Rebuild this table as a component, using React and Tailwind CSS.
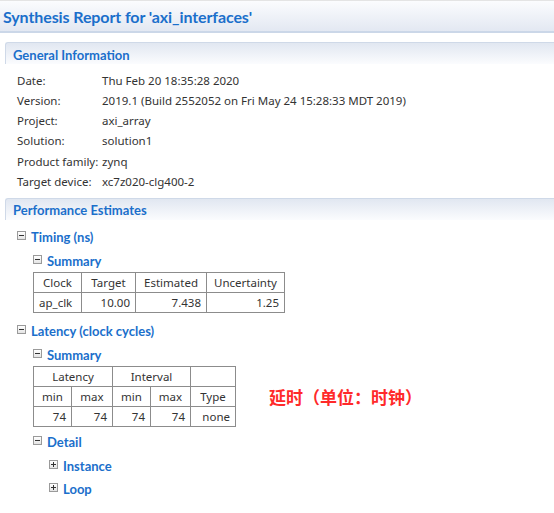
import React from "react";

const BLUE = "text-[#1b6fcb]";
const HFONT = { fontFamily: 'Lato, "Noto Sans", sans-serif' };

function Box({ plus }) {
  return (
    <span className="relative inline-block w-[9px] h-[9px] border border-[#9a9a9a] bg-gradient-to-b from-white to-[#e4e4e4] shrink-0">
      <span className="absolute left-[1px] top-[3px] w-[5px] h-[1px] bg-[#333]" />
      {plus && <span className="absolute left-[3px] top-[1px] w-[1px] h-[5px] bg-[#333]" />}
    </span>
  );
}

function TreeRow({ indent, children, plus }) {
  return (
    <div className={`flex items-center h-[20px] ${indent}`}>
      <Box plus={plus} />
      <span className={`ml-[5px] font-bold text-[13px] leading-[20px] translate-y-[1px] ${BLUE}`} style={HFONT}>
        {children}
      </span>
    </div>
  );
}

function SectionHeader({ children }) {
  return (
    <div className="ml-[5px] h-[22px] rounded-tl-[3px] border-t border-l border-[#cfd9e8] bg-gradient-to-b from-[#e1e7f1] to-[#fbfcfe] flex items-center pl-[7px]">
      <span className={`font-bold text-[13px] leading-[20px] translate-y-[1px] ${BLUE}`} style={HFONT}>
        {children}
      </span>
    </div>
  );
}

const info = [
  ["Date:", "Thu Feb 20 18:35:28 2020"],
  ["Version:", "2019.1 (Build 2552052 on Fri May 24 15:28:33 MDT 2019)"],
  ["Project:", "axi_array"],
  ["Solution:", "solution1"],
  ["Product family:", "zynq"],
  ["Target device:", "xc7z020-clg400-2"],
];

const td = "border border-[#8c8c8c] h-[20px] px-[5px] py-0";

export default function App() {
  return (
    <div
      className="w-[554px] h-[513px] bg-white overflow-hidden text-[#333]"
      style={{ fontFamily: '"Noto Sans", "Noto Sans CJK SC", sans-serif' }}
    >
      <div className="h-[33px] border-t border-[#e4e4e4] border-b-2 border-b-[#cbd7e8] bg-gradient-to-b from-[#fbfcfe] to-[#e3e8f2] flex items-center pl-[3px]">
        <span className={`font-bold text-[16px] tracking-[-0.1px] translate-y-[1px] ${BLUE}`} style={HFONT}>
          Synthesis Report for 'axi_interfaces'
        </span>
      </div>
      <div className="h-[9px]" />
      <SectionHeader>General Information</SectionHeader>
      <div className="pt-[6px] pl-[17px] text-[11.5px]">
        {info.map(([k, v]) => (
          <div key={k} className="flex items-center h-[20.3px]">
            <span className="w-[85px]">{k}</span>
            <span>{v}</span>
          </div>
        ))}
      </div>
      <div className="h-[6px]" />
      <SectionHeader>Performance Estimates</SectionHeader>
      <div className="pt-[6px] text-[11.5px]">
        <TreeRow indent="pl-[17px]">Timing (ns)</TreeRow>
        <div className="h-[4px]" />
        <TreeRow indent="pl-[33px]">Summary</TreeRow>
        <div className="pl-[33px] pt-[2px]">
          <table className="border-collapse">
            <tbody>
              <tr>
                <td className={`${td} w-[48px] text-center`}>Clock</td>
                <td className={`${td} w-[54px] text-center`}>Target</td>
                <td className={`${td} w-[71px] text-center`}>Estimated</td>
                <td className={`${td} w-[78px] text-center`}>Uncertainty</td>
              </tr>
              <tr>
                <td className={`${td} text-left`}>ap_clk</td>
                <td className={`${td} text-right`}>10.00</td>
                <td className={`${td} text-right`}>7.438</td>
                <td className={`${td} text-right`}>1.25</td>
              </tr>
            </tbody>
          </table>
        </div>
        <div className="h-[7px]" />
        <TreeRow indent="pl-[17px]">Latency (clock cycles)</TreeRow>
        <div className="h-[4px]" />
        <TreeRow indent="pl-[33px]">Summary</TreeRow>
        <div className="pl-[33px] pt-[2px] flex items-center">
          <table className="border-collapse">
            <tbody>
              <tr>
                <td colSpan={2} className={`${td} text-center`}>Latency</td>
                <td colSpan={2} className={`${td} text-center`}>Interval</td>
                <td className={td}></td>
              </tr>
              <tr>
                <td className={`${td} w-[38px] text-center`}>min</td>
                <td className={`${td} w-[41px] text-center`}>max</td>
                <td className={`${td} w-[38px] text-center`}>min</td>
                <td className={`${td} w-[40px] text-center`}>max</td>
                <td className={`${td} w-[45px] text-center`}>Type</td>
              </tr>
              <tr>
                <td className={`${td} text-right`}>74</td>
                <td className={`${td} text-right`}>74</td>
                <td className={`${td} text-right`}>74</td>
                <td className={`${td} text-right`}>74</td>
                <td className={`${td} text-right`}>none</td>
              </tr>
            </tbody>
          </table>
          <span className="ml-[33px] text-[17px] font-bold text-[#ff2a2a]" style={{ fontFamily: '"Noto Sans CJK SC", sans-serif' }}>
            延时（单位：时钟）
          </span>
        </div>
        <div className="h-[4px]" />
        <TreeRow indent="pl-[33px]">Detail</TreeRow>
        <div className="h-[4px]" />
        <TreeRow indent="pl-[49px]" plus>Instance</TreeRow>
        <div className="h-[3px]" />
        <TreeRow indent="pl-[49px]" plus>Loop</TreeRow>
      </div>
    </div>
  );
}
